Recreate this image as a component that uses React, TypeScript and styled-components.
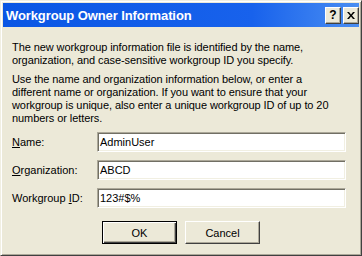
import React from "react";
import styled, { createGlobalStyle } from "styled-components";

const GlobalStyle = createGlobalStyle`
  html, body {
    margin: 0;
    padding: 0;
    background: #ece9d8;
  }
  * {
    box-sizing: border-box;
  }
`;

const Window = styled.div`
  width: 362px;
  height: 256px;
  display: flex;
  flex-direction: column;
  background: #ece9d8;
  border: 1px solid;
  border-color: #f1efe2 #404040 #404040 #f1efe2;
  box-shadow: inset 1px 1px 0 #ffffff, inset -1px -1px 0 #aca899;
  padding: 2px;
  font-family: "Liberation Sans", Arial, sans-serif;
  font-size: 11px;
  color: #000;
`;

const TitleBar = styled.div`
  height: 24px;
  display: flex;
  align-items: center;
  padding: 0 0 0 3px;
  background: linear-gradient(90deg, #0a56e4 0%, #1862ec 70%, #4a8ef2 100%);
`;

const Title = styled.div`
  flex: 1;
  color: #fff;
  font-weight: bold;
  font-size: 13px;
  letter-spacing: -0.1px;
`;

const CaptionButton = styled.button<{ $gap?: number }>`
  width: 16px;
  height: 17px;
  margin-left: ${(p) => p.$gap ?? 0}px;
  padding: 0;
  display: flex;
  align-items: center;
  justify-content: center;
  background: #ece9d8;
  border: 1px solid;
  border-color: #ffffff #404040 #404040 #ffffff;
  box-shadow: inset -1px -1px 0 #aca899;
  font-family: "Liberation Sans", Arial, sans-serif;
  font-weight: bold;
  font-size: 12px;
  color: #000;
  line-height: 1;
`;

const Body = styled.div`
  flex: 1;
  display: flex;
  flex-direction: column;
  padding: 14px 13px 0 9px;
`;

const Para = styled.p<{ $after: number }>`
  margin: 0 0 ${(p) => p.$after}px 0;
  line-height: 13px;
  letter-spacing: -0.08px;
  white-space: nowrap;
`;

const Fields = styled.div`
  display: flex;
  flex-direction: column;
  gap: 8px;
`;

const Row = styled.div`
  display: flex;
  align-items: center;
  height: 20px;
`;

const Label = styled.label`
  width: 85px;
  flex: none;
`;

const Key = styled.span`
  text-decoration: underline;
`;

const Field = styled.div`
  flex: 1;
  height: 20px;
  background: #fff;
  border: 1px solid;
  border-color: #aca899 #ffffff #ffffff #aca899;
  box-shadow: inset 1px 1px 0 #716f64, inset -1px -1px 0 #f1efe2;
  padding: 0 2px;
  display: flex;
  align-items: center;
  font-size: 11px;
`;

const Buttons = styled.div`
  display: flex;
  justify-content: center;
  gap: 8px;
  margin-top: 13px;
  padding-left: 4px;
`;

const PushButton = styled.button<{ $default?: boolean }>`
  width: 75px;
  height: 23px;
  padding: 0;
  background: #ece9d8;
  font-family: "Liberation Sans", Arial, sans-serif;
  font-size: 11px;
  color: #000;
  border: 1px solid;
  border-color: ${(p) =>
    p.$default ? "#000" : "#ffffff #404040 #404040 #ffffff"};
  box-shadow: ${(p) =>
    p.$default
      ? "inset 1px 1px 0 #ffffff, inset -1px -1px 0 #404040, inset -2px -2px 0 #aca899"
      : "inset -1px -1px 0 #aca899"};
`;

const CloseIcon = () => (
  <svg width="8" height="7" viewBox="0 0 8 7">
    <path d="M0 0h2l2 2.5L6 0h2L5 3.5 8 7H6L4 4.5 2 7H0l3-3.5z" fill="#000" />
  </svg>
);

export default function App() {
  return (
    <>
      <GlobalStyle />
      <Window>
        <TitleBar>
          <Title>Workgroup Owner Information</Title>
          <CaptionButton>?</CaptionButton>
          <CaptionButton $gap={2}>
            <CloseIcon />
          </CaptionButton>
        </TitleBar>
        <Body>
          <Para $after={6}>
            The new workgroup information file is identified by the name,
            <br />
            organization, and case-sensitive workgroup ID you specify.
          </Para>
          <Para $after={7}>
            Use the name and organization information below, or enter a
            <br />
            different name or organization. If you want to ensure that your
            <br />
            workgroup is unique, also enter a unique workgroup ID of up to 20
            <br />
            numbers or letters.
          </Para>
          <Fields>
            <Row>
              <Label>
                <Key>N</Key>ame:
              </Label>
              <Field>AdminUser</Field>
            </Row>
            <Row>
              <Label>
                <Key>O</Key>rganization:
              </Label>
              <Field>ABCD</Field>
            </Row>
            <Row>
              <Label>
                Workgroup <Key>I</Key>D:
              </Label>
              <Field>123#$%</Field>
            </Row>
          </Fields>
          <Buttons>
            <PushButton $default>OK</PushButton>
            <PushButton>Cancel</PushButton>
          </Buttons>
        </Body>
      </Window>
    </>
  );
}
